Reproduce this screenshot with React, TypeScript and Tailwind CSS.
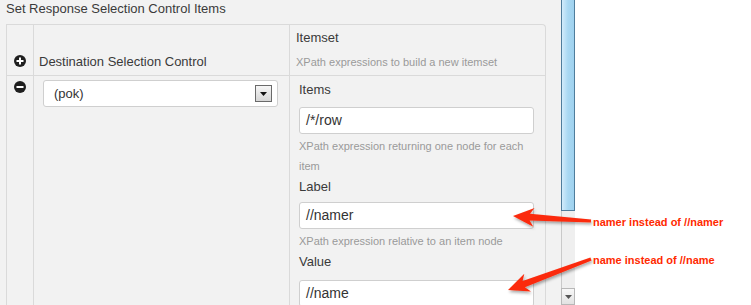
import React, { type ReactElement } from 'react'

type Pt = [number, number]

function arrowPoints (tail: Pt, tip: Pt): string {
	const dx = tip[0] - tail[0]
	const dy = tip[1] - tail[1]
	const len = Math.sqrt(dx * dx + dy * dy)
	const ux = dx / len
	const uy = dy / len
	const nx = -uy
	const ny = ux
	const H = 21
	const W = 9.5
	const s1 = 3.3
	const s0 = 1.6
	const at = (d: number, w: number): string =>
		`${(tip[0] - ux * d + nx * w).toFixed(1)},${(tip[1] - uy * d + ny * w).toFixed(1)}`
	return [
		`${(tail[0] + nx * s0).toFixed(1)},${(tail[1] + ny * s0).toFixed(1)}`,
		at(H * 0.8, s1),
		at(H, W),
		`${tip[0]},${tip[1]}`,
		at(H, -W),
		at(H * 0.8, -s1),
		`${(tail[0] - nx * s0).toFixed(1)},${(tail[1] - ny * s0).toFixed(1)}`
	].join(' ')
}

function RoundIcon ({ plus }: { plus: boolean }): ReactElement {
	return (
		<svg width="12" height="12" viewBox="0 0 12 12">
			<circle cx="6" cy="6" r="6" fill="#1f1f1f" />
			<rect x="2.5" y="5" width="7" height="2" fill="#fff" />
			{plus && <rect x="5" y="2.5" width="2" height="7" fill="#fff" />}
		</svg>
	)
}

function TextField ({ value }: { value: string }): ReactElement {
	return (
		<div className="w-[235px] h-[27px] shrink-0 bg-white border border-[#cfcfcf] rounded-[3px] pl-[6px] flex items-center text-[14px] text-[#333]">
			{value}
		</div>
	)
}

export default function App (): ReactElement {
	return (
		<div className="relative w-[751px] h-[305px] overflow-hidden bg-white flex font-['Liberation_Sans',Arial,sans-serif]">
			{/* Main panel */}
			<div className="w-[561px] shrink-0 bg-[#f2f2f2] pl-[6px]">
				<div className="h-[24px] pt-[1px] text-[13px] leading-[16px] text-[#3a3a3a]">
					{'Set Response Selection Control Items'}
				</div>
				<div className="w-[540px] h-[281px] border-l border-t border-r border-[#dadada] rounded-tr-[4px] grid grid-cols-[26px_256px_1fr] grid-rows-[51px_1fr]">
					{/* header */}
					<div className="border-b border-[#dadada] flex justify-center pt-[30px]">
						<RoundIcon plus />
					</div>
					<div className="border-b border-l border-[#dadada] pl-[5px] pt-[29px] text-[13px] leading-[16px] text-[#3a3a3a]">
						{'Destination Selection Control'}
					</div>
					<div className="border-b border-l border-[#dadada] pl-[6px] pt-[5px]">
						<div className="text-[13px] leading-[16px] text-[#3a3a3a]">{'Itemset'}</div>
						<div className="mt-[8px] text-[11px] leading-[16px] text-[#9a9a9a]">{'XPath expressions to build a new itemset'}</div>
					</div>

					{/* body */}
					<div className="flex justify-center pt-[5px]">
						<RoundIcon plus={false} />
					</div>
					<div className="border-l border-[#dadada] pl-[9px] pt-[4px]">
						<div className="w-[235px] h-[27px] bg-white border border-[#cfcfcf] rounded-[3px] flex items-center pl-[10px] pr-[5px]">
							<span className="flex-1 text-[13px] text-[#333]">{'(pok)'}</span>
							<div className="w-[17px] h-[17px] border border-[#6a6a6a] bg-gradient-to-b from-[#f6f6f6] to-[#d6d6d6] flex items-center justify-center">
								<svg width="7" height="4" viewBox="0 0 7 4"><polygon points="0,0 7,0 3.5,4" fill="#111" /></svg>
							</div>
						</div>
					</div>
					<div className="border-l border-[#dadada] pl-[9px] pt-[4px] flex flex-col">
						<div className="text-[13px] leading-[20px] text-[#3a3a3a]">{'Items'}</div>
						<div className="mt-[7px]"><TextField value="/*/row" /></div>
						<div className="mt-[2px] w-[240px] text-[11px] leading-[20px] text-[#9a9a9a]">
							{'XPath expression returning one node for each item'}
						</div>
						<div className="mt-[1px] text-[13px] leading-[20px] text-[#3a3a3a]">{'Label'}</div>
						<div className="mt-[5px]"><TextField value="//namer" /></div>
						<div className="mt-[2px] text-[11px] leading-[20px] text-[#9a9a9a]">
							{'XPath expression relative to an item node'}
						</div>
						<div className="mt-[1px] text-[13px] leading-[20px] text-[#3a3a3a]">{'Value'}</div>
						<div className="mt-[8px]"><TextField value="//name" /></div>
					</div>
				</div>
			</div>

			{/* Scrollbar */}
			<div className="w-[14px] shrink-0 flex flex-col">
				<div className="h-[211px] border border-t-0 border-[#4f7d9c] bg-gradient-to-r from-[#d2ecfb] via-[#a9d8f2] to-[#9fd2ef]" />
				<div className="flex-1 bg-[#efefef] border-l border-[#c9c9c9]" />
				<div className="h-[17px] bg-gradient-to-b from-[#f8f8f8] to-[#e2e2e2] border border-[#b8b8b8] flex items-center justify-center">
					<svg width="7" height="4" viewBox="0 0 7 4"><polygon points="0,0 7,0 3.5,4" fill="#555" /></svg>
				</div>
			</div>
			<div className="flex-1 bg-white" />

			{/* Annotations */}
			<svg className="absolute left-0 top-0 pointer-events-none" width="751" height="305">
				<defs>
					<filter id="shadow" x="-20%" y="-50%" width="140%" height="200%">
						<feDropShadow dx="1" dy="2" stdDeviation="1.5" floodColor="#000" floodOpacity="0.35" />
					</filter>
				</defs>
				<polygon points={arrowPoints([591, 221], [513, 216])} fill="#fb2a0c" filter="url(#shadow)" />
				<polygon points={arrowPoints([591, 259], [508, 290])} fill="#fb2a0c" filter="url(#shadow)" />
			</svg>
			<div className="absolute left-[593px] top-[214px] text-[11px] leading-[16px] font-bold text-[#ff2a00]">
				{'namer instead of //namer'}
			</div>
			<div className="absolute left-[593px] top-[252px] text-[11px] leading-[16px] font-bold text-[#ff2a00]">
				{'name instead of //name'}
			</div>
		</div>
	)
}
